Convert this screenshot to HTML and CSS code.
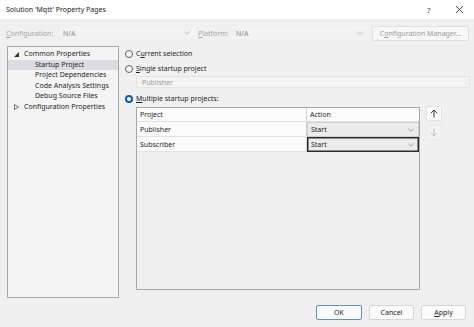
FILE: index.html
```html
<!DOCTYPE html>
<html>
<head>
<meta charset="utf-8">
<link rel="stylesheet" href="styles.css">
</head>
<body>
<div class="window">
  <div class="titlebar">
    <span class="title">Solution 'Mqtt' Property Pages</span>
    <span class="help">?</span>
    <span class="close">
      <svg width="9" height="9" viewBox="0 0 9 9"><path d="M1 1 L8 8 M8 1 L1 8" stroke="#333" stroke-width="0.9" fill="none"/></svg>
    </span>
  </div>

  <div class="toolbar">
    <span class="label dis cfg-label"><u>C</u>onfiguration:</span>
    <div class="combo cfg"><span>N/A</span><svg class="chev" width="6" height="4" viewBox="0 0 6 4"><path d="M0.5 0.8 L3 3.2 L5.5 0.8" stroke="#b0b0b0" stroke-width="0.8" fill="none"/></svg></div>
    <span class="label dis plat-label"><u>P</u>latform:</span>
    <div class="combo plat"><span>N/A</span><svg class="chev" width="6" height="4" viewBox="0 0 6 4"><path d="M0.5 0.8 L3 3.2 L5.5 0.8" stroke="#b0b0b0" stroke-width="0.8" fill="none"/></svg></div>
    <div class="btn cm dis">C<u>o</u>nfiguration Manager...</div>
  </div>

  <div class="main">
    <div class="tree">
      <div class="node"><span class="tw"><svg width="5" height="5" viewBox="0 0 5 5"><path d="M5 0 L5 5 L0 5 Z" fill="#333"/></svg></span>Common Properties</div>
      <div class="node child sel">Startup Project</div>
      <div class="node child">Project Dependencies</div>
      <div class="node child">Code Analysis Settings</div>
      <div class="node child">Debug Source Files</div>
      <div class="node"><span class="tw"><svg width="5" height="6" viewBox="0 0 5 6"><path d="M0.5 0.5 L4.5 3 L0.5 5.5 Z" fill="none" stroke="#555" stroke-width="0.8"/></svg></span>Configuration Properties</div>
    </div>

    <div class="content">
      <div class="radio-row r1"><span class="radio"></span><span>C<u>u</u>rrent selection</span></div>
      <div class="radio-row r2"><span class="radio"></span><span><u>S</u>ingle startup project</span></div>
      <div class="single-combo"><span>Publisher</span></div>
      <div class="radio-row r3"><span class="radio on"></span><span><u>M</u>ultiple startup projects:</span></div>

      <div class="grid-area">
        <div class="grid">
          <div class="grow head">
            <div class="c1">Project</div>
            <div class="c2">Action</div>
          </div>
          <div class="grow">
            <div class="c1">Publisher</div>
            <div class="c2 act"><span>Start</span><svg class="chev" width="6" height="4" viewBox="0 0 6 4"><path d="M0.5 0.8 L3 3.2 L5.5 0.8" stroke="#888" stroke-width="0.8" fill="none"/></svg></div>
          </div>
          <div class="grow">
            <div class="c1">Subscriber</div>
            <div class="c2 act focus"><span>Start</span><svg class="chev" width="6" height="4" viewBox="0 0 6 4"><path d="M0.5 0.8 L3 3.2 L5.5 0.8" stroke="#888" stroke-width="0.8" fill="none"/></svg></div>
          </div>
        </div>
        <div class="movers">
          <div class="mv up"><svg width="8" height="9" viewBox="0 0 8 9"><path d="M4 8.5 L4 1 M0.8 4.2 L4 1 L7.2 4.2" stroke="#222" stroke-width="0.9" fill="none"/></svg></div>
          <div class="mv down"><svg width="8" height="9" viewBox="0 0 8 9"><path d="M4 0.5 L4 8 M0.8 4.8 L4 8 L7.2 4.8" stroke="#bdbdbd" stroke-width="0.9" fill="none"/></svg></div>
        </div>
      </div>
    </div>
  </div>

  <div class="footer">
    <div class="btn ok">OK</div>
    <div class="btn">Cancel</div>
    <div class="btn"><u>A</u>pply</div>
  </div>
</div>
</body>
</html>
```

FILE: styles.css
```css
* { box-sizing: border-box; }
html, body { margin: 0; padding: 0; }
body {
  width: 474px;
  height: 327px;
  overflow: hidden;
  background: #f0f0f0;
  font-family: "Segoe UI", "Noto Sans", "Open Sans", sans-serif;
  font-size: 7px;
  color: #1f1f1f;
}
u { text-decoration: underline; text-underline-offset: 1px; }
.window { width: 474px; height: 327px; display: flex; flex-direction: column; }

.titlebar {
  height: 19px;
  background: #ffffff;
  display: flex;
  align-items: center;
  padding-left: 6px;
}
.title { font-size: 7px; color: #1a1a1a; }
.help { margin-left: auto; width: 10px; text-align: center; color: #333; font-size: 7.5px; }
.close { width: 9px; margin-left: 21px; margin-right: 10px; display: flex; }

.toolbar {
  display: flex;
  align-items: center;
  height: 14px;
  margin-top: 7px;
  padding-left: 6px;
}
.label.dis { color: #a6a6a6; }
.cfg-label { width: 54px; }
.combo {
  height: 14px;
  display: flex;
  align-items: center;
  justify-content: space-between;
  padding: 0 6px 0 3px;
  background: #f2f2f2;
  color: #8a8a8a;
}
.cfg { width: 136px; }
.plat-label { width: 35px; margin-left: 2px; }
.plat { width: 136px; }
.btn {
  height: 15px;
  display: flex;
  align-items: center;
  justify-content: center;
  background: #fbfbfb;
  border: 1px solid #d6d6d6;
  border-radius: 2px;
  color: #1b1b1b;
}
.btn.cm { margin-left: 3px; width: 97px; color: #9c9c9c; background: #f7f7f7; border-color: #e0e0e0; }

.main {
  display: flex;
  margin-top: 6px;
  padding-left: 7px;
}
.tree {
  width: 112px;
  height: 252px;
  border: 1px solid #a9a9a9;
  background: #f4f4f4;
  padding-top: 2px;
}
.node {
  height: 10.5px;
  line-height: 10.5px;
  display: flex;
  align-items: center;
  padding-left: 6px;
  white-space: nowrap;
}
.tw { width: 10px; display: flex; align-items: center; }
.node.child { padding-left: 27px; }
.node.sel { background: #dcdce6; }

.content {
  margin-left: 6px;
  display: flex;
  flex-direction: column;
}
.radio-row {
  display: flex;
  align-items: center;
  height: 9px;
  gap: 3px;
}
.r1 { margin-top: 3px; }
.r2 { margin-top: 6px; }
.r3 { margin-top: 6px; }
.radio {
  width: 8px;
  height: 8px;
  border-radius: 50%;
  border: 1px solid #5f5f5f;
  background: #f6f6f6;
  display: inline-block;
}
.radio.on {
  border: 2.5px solid #005fb8;
  background: #ffffff;
}
.single-combo {
  margin-top: 3px;
  margin-left: 11px;
  width: 334px;
  height: 12px;
  background: #f3f3f3;
  border: 1px solid #e4e4e4;
  color: #9d9d9d;
  padding-left: 5px;
  display: flex;
  align-items: center;
}

.grid-area {
  display: flex;
  margin-top: 4px;
  margin-left: 11px;
}
.grid {
  width: 284px;
  height: 183px;
  border: 1px solid #a8a8a8;
  background: #efefef;
}
.grow {
  display: flex;
  height: 15px;
}
.grow.head { height: 14px; }
.c1 {
  width: 170px;
  display: flex;
  align-items: center;
  padding-left: 3px;
  background: #fbfbfb;
  border-right: 1px solid #d4d4d4;
  border-bottom: 1px solid #e2e2e2;
}
.c2 {
  flex: 1;
  display: flex;
  align-items: center;
  padding-left: 3px;
  background: #fbfbfb;
  border-bottom: 1px solid #e2e2e2;
}
.c2.act {
  justify-content: space-between;
  padding-right: 4px;
  background: #ececec;
  border: 1px solid #cfcfcf;
}
.c2.act.focus {
  border: 1px solid #2b2b2b;
  box-shadow: inset 0 0 0 0.5px #2b2b2b;
}
.movers {
  margin-left: 6px;
  display: flex;
  flex-direction: column;
  gap: 4px;
}
.mv {
  width: 16px;
  height: 15px;
  display: flex;
  align-items: center;
  justify-content: center;
  border-radius: 2px;
}
.mv.up { background: #fdfdfd; border: 1px solid #e0e0e0; margin-top: -1px; }
.mv.down { background: #f3f3f3; border: 1px solid #ebebeb; }

.footer {
  display: flex;
  justify-content: flex-end;
  gap: 7px;
  margin-top: 7px;
  padding-right: 8px;
}
.footer .btn { width: 45px; }
.footer .btn.ok { width: 46px; border: 1px solid #5b8fc9; }
```
